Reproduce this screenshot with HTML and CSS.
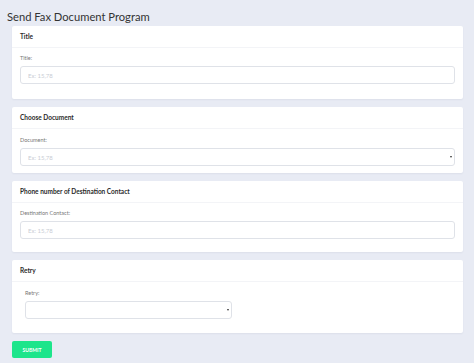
FILE: index.html
```html
<!DOCTYPE html>
<html>
  <head>
    <meta charset="UTF-8">
    <link rel="stylesheet" href="styles.css">
    <title>Send Fax Document Program</title>
  </head>
  <body>
    <div class="page">
      <h1 class="page-title">Send Fax Document Program</h1>
      <form class="fax-form">
        <section class="card card-title">
          <div class="card-header">Title</div>
          <div class="card-body">
            <label class="field-label">Title:</label>
            <input class="field" type="text" placeholder="Ex: 15,78">
          </div>
        </section>
        <section class="card card-doc">
          <div class="card-header">Choose Document</div>
          <div class="card-body">
            <label class="field-label">Document:</label>
            <div class="select-wrap">
              <select class="field">
                <option>Ex: 15,78</option>
              </select>
            </div>
          </div>
        </section>
        <section class="card card-contact">
          <div class="card-header">Phone number of Destination Contact</div>
          <div class="card-body">
            <label class="field-label">Destination Contact:</label>
            <input class="field" type="text" placeholder="Ex: 15,78">
          </div>
        </section>
        <section class="card card-retry">
          <div class="card-header">Retry</div>
          <div class="card-body">
            <div class="half">
              <label class="field-label">Retry:</label>
              <div class="select-wrap">
                <select class="field">
                  <option></option>
                </select>
              </div>
            </div>
          </div>
        </section>
        <button class="submit" type="button">SUBMIT</button>
      </form>
    </div>
  </body>
</html>
```

FILE: styles.css
```css
body {
  margin: 0;
  background: #e8ebf4;
  font-family: Lato, "Open Sans", sans-serif;
  color: #222;
}
.page {
  padding: 0 11px 0 7px;
}
.page-title {
  margin: 0;
  padding-top: 10px;
  font-size: 11.2px;
  line-height: 14px;
  font-weight: 400;
  color: #333;
}
.fax-form {
  margin-top: 2px;
  margin-left: 5px;
}
.card {
  background: #fff;
  border-radius: 2px;
  box-shadow: 0 1px 2px rgba(40, 50, 90, 0.06);
  margin-bottom: 8px;
}
.card-header {
  height: 21px;
  line-height: 21px;
  padding: 0 8px;
  font-size: 6.5px;
  font-weight: 700;
  color: #2a2a2a;
  border-bottom: 1px solid #f3f4f7;
}
.card-body {
  padding: 7px 8px 13px;
}
.card-title .card-body {
  padding-bottom: 15px;
}
.card-doc .card-body {
  padding-top: 8px;
  padding-bottom: 7px;
}
.card-retry .card-body {
  padding-top: 8px;
  padding-bottom: 14px;
}
.field-label {
  display: block;
  font-size: 5.5px;
  line-height: 7px;
  color: #777;
  margin-bottom: 4px;
}
.field {
  display: block;
  box-sizing: border-box;
  width: 100%;
  height: 18px;
  margin: 0;
  padding: 0 7px;
  border: 1px solid #dfe2e8;
  border-radius: 3px;
  background: #fff;
  font-family: inherit;
  font-size: 6px;
  color: #c9cdd5;
  outline: none;
}
.field::placeholder {
  color: #c9cdd5;
}
select.field {
  appearance: none;
  -webkit-appearance: none;
}
.select-wrap {
  position: relative;
}
.select-wrap::after {
  content: "";
  position: absolute;
  right: 3px;
  top: 8px;
  border-left: 1.5px solid transparent;
  border-right: 1.5px solid transparent;
  border-top: 2px solid #333;
}
.half {
  width: 207px;
  padding-left: 5px;
}
.submit {
  display: block;
  margin-top: 3px;
  width: 40px;
  height: 17px;
  padding: 0;
  border: none;
  border-radius: 2px;
  background: #1de58b;
  color: #fff;
  font-family: inherit;
  font-size: 5px;
  font-weight: 700;
}
```
